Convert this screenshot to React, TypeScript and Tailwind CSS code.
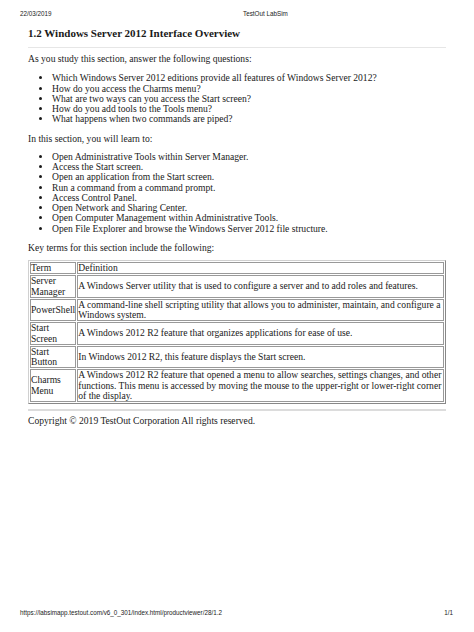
import React from 'react'

const QUESTIONS = [
  'Which Windows Server 2012 editions provide all features of Windows Server 2012?',
  'How do you access the Charms menu?',
  'What are two ways can you access the Start screen?',
  'How do you add tools to the Tools menu?',
  'What happens when two commands are piped?',
]

const GOALS = [
  'Open Administrative Tools within Server Manager.',
  'Access the Start screen.',
  'Open an application from the Start screen.',
  'Run a command from a command prompt.',
  'Access Control Panel.',
  'Open Network and Sharing Center.',
  'Open Computer Management within Administrative Tools.',
  'Open File Explorer and browse the Windows Server 2012 file structure.',
]

const TERMS: [string, string][] = [
  ['Server Manager', 'A Windows Server utility that is used to configure a server and to add roles and features.'],
  ['PowerShell', 'A command-line shell scripting utility that allows you to administer, maintain, and configure a Windows system.'],
  ['Start Screen', 'A Windows 2012 R2 feature that organizes applications for ease of use.'],
  ['Start Button', 'In Windows 2012 R2, this feature displays the Start screen.'],
  ['Charms Menu', 'A Windows 2012 R2 feature that opened a menu to allow searches, settings changes, and other functions. This menu is accessed by moving the mouse to the upper-right or lower-right corner of the display.'],
]

export default function App() {
  return (
    <div className="w-[474px] h-[632px] bg-white flex flex-col text-[#1a1a1a]">
      {/* print header */}
      <div className="flex items-center px-[20px] pt-[11px] h-[18px] font-['Liberation_Sans',Arial,sans-serif] text-[6.3px] leading-none">
        <span className="w-[223px]">22/03/2019</span>
        <span className="flex-1">TestOut LabSim</span>
      </div>

      {/* page body */}
      <div className="px-[28px] font-['Liberation_Serif','Times_New_Roman',serif] text-[9.6px] leading-[10.25px]">
        <h3 className="font-bold text-[11px] leading-[12px] mt-[9px]">1.2 Windows Server 2012 Interface Overview</h3>
        <div className="h-px bg-[#e6e6e6] mt-[8px]" />

        <p className="mt-[6px]">As you study this section, answer the following questions:</p>
        <ul className="list-disc pl-[24px] my-[9px]">
          {QUESTIONS.map(q => <li key={q}>{q}</li>)}
        </ul>

        <p>In this section, you will learn to:</p>
        <ul className="list-disc pl-[24px] mt-[8px] mb-[9px]">
          {GOALS.map(g => <li key={g}>{g}</li>)}
        </ul>

        <p>Key terms for this section include the following:</p>

        <table className="w-full mt-[7px] border-separate border-spacing-[1px] border border-t-[#d0d0d0] border-l-[#d0d0d0] border-r-[#888] border-b-[#888]">
          <tbody>
            <tr>
              <td className="w-[46px] border border-[#999] p-0 align-middle">Term</td>
              <td className="border border-[#999] p-0">Definition</td>
            </tr>
            {TERMS.map(([term, def]) => (
              <tr key={term}>
                <td className="border border-[#999] p-0 align-middle">{term}</td>
                <td className="border border-[#999] p-0 align-middle">{def}</td>
              </tr>
            ))}
          </tbody>
        </table>

        <div className="h-[2px] bg-[#dcdcdc] mt-[5px]" />
        <p className="mt-[5px]">Copyright © 2019 TestOut Corporation All rights reserved.</p>
      </div>

      {/* print footer */}
      <div className="mt-auto flex items-center justify-between px-[20px] pb-[16px] font-['Liberation_Sans',Arial,sans-serif] text-[6.3px] leading-none">
        <span>https://labsimapp.testout.com/v6_0_301/index.html/productviewer/28/1.2</span>
        <span className="mr-[1px]">1/1</span>
      </div>
    </div>
  )
}
